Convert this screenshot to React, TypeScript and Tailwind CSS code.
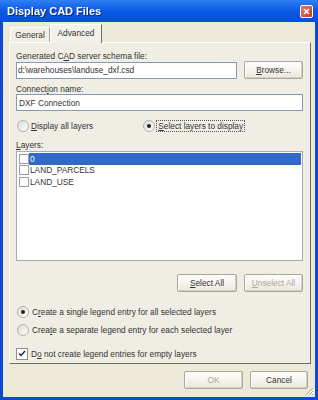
import React from 'react';

function U({ children }: { children: React.ReactNode }) {
  return <span className="underline underline-offset-[1px]">{children}</span>;
}

function Button({ children, w, disabled }: { children: React.ReactNode; w: string; disabled?: boolean }) {
  return (
    <div
      className={`${w} h-[18px] flex items-center justify-center rounded-[2px] border border-[#A9A797] bg-gradient-to-b from-[#FFFFFF] to-[#EAE8DC] shadow-[inset_-1px_-1px_0_#D6D2C2,inset_1px_1px_0_#FFFFFF] ${
        disabled ? 'text-[#ACA899]' : 'text-[#333]'
      }`}
    >
      {children}
    </div>
  );
}

function Radio({ checked }: { checked?: boolean }) {
  return (
    <div className="w-[12px] h-[12px] rounded-full border border-[#B0B0B0] bg-gradient-to-br from-[#DCDBD4] to-white flex items-center justify-center shrink-0">
      {checked && <div className="w-[4px] h-[4px] rounded-full bg-[#222]" />}
    </div>
  );
}

function Check({ checked }: { checked?: boolean }) {
  return (
    <div className="w-[12px] h-[12px] border border-[#8E8F8F] bg-white flex items-center justify-center shrink-0">
      {checked && (
        <svg width="8" height="7" viewBox="0 0 8 7">
          <path d="M1 3.5 L3 5.5 L7 1" stroke="#222" strokeWidth="1.3" fill="none" />
        </svg>
      )}
    </div>
  );
}

export default function App() {
  return (
    <div className="w-[318px] h-[400px] bg-[#0B4AD6] flex flex-col font-['Liberation_Sans',Arial,sans-serif] text-[8.3px] leading-[10px] text-[#333] select-none">
      {/* title bar */}
      <div className="h-[22px] shrink-0 flex items-center pl-[7px] pr-[4px] bg-gradient-to-b from-[#2F80F4] via-[#0A58E4] to-[#0550DA]">
        <span className="text-white font-bold text-[11px] drop-shadow-[1px_1px_0_#0A2A8A]">Display CAD Files</span>
        <div className="ml-auto mr-[1px] w-[13px] h-[13px] rounded-[2px] border border-white bg-gradient-to-br from-[#E87A5A] to-[#C23A1A] flex items-center justify-center">
          <svg width="7" height="7" viewBox="0 0 7 7">
            <path d="M1 1 L6 6 M6 1 L1 6" stroke="white" strokeWidth="1.6" />
          </svg>
        </div>
      </div>

      {/* body */}
      <div className="flex-1 mx-[3px] mb-[3px] bg-[#ECE9D8] flex flex-col relative">
        {/* tabs */}
        <div className="h-[19px] mt-[1px] pl-[7px] flex items-end relative z-10">
          <div className="w-[40px] h-[15px] border-t border-l border-white border-r border-r-[#ACA899] bg-[#F1EFE5] flex items-center justify-center">
            General
          </div>
          <div className="w-[52px] h-[19px] -mb-[1px] border-t border-l border-white border-r border-r-[#716F64] bg-[#F3F2EA] flex items-center justify-center pb-[2px]">
            Advanced
          </div>
        </div>

        {/* panel */}
        <div className="ml-[6px] w-[302px] h-[322px] border border-t-white border-l-white border-r-[#716F64] border-b-[#716F64] bg-[#F0EEE4] pl-[6px] pr-[7px] pt-[8px] flex flex-col">
          <div className="h-[10px]">
            Generated C<U>A</U>D server schema file:
          </div>
          <div className="flex items-center h-[18px]">
            <div className="w-[221px] h-[17px] border border-[#7F9DB9] bg-white pl-[1px] flex items-center">
              d:\warehouses\landuse_dxf.csd
            </div>
            <div className="ml-auto">
              <Button w="w-[59px]">
                <U>B</U>rowse...
              </Button>
            </div>
          </div>
          <div className="h-[10px] mt-[5px]">
            Connect<U>i</U>on name:
          </div>
          <div className="w-[287px] h-[17px] border border-[#7F9DB9] bg-white pl-[2px] flex items-center">
            DXF Connection
          </div>
          <div className="h-[12px] mt-[9px] flex items-center">
            <div className="ml-[1px]">
              <Radio />
            </div>
            <span className="ml-[2px]">
              <U>D</U>isplay all layers
            </span>
            <div className="ml-[50px]">
              <Radio checked />
            </div>
            <span className="ml-[2px] px-[1px] outline outline-1 outline-dotted outline-[#555]">
              <U>S</U>elect layers to display
            </span>
          </div>
          <div className="h-[10px] mt-[8px]">
            <U>L</U>ayers:
          </div>
          <div className="w-[287px] h-[110px] mt-[1px] border border-[#A5ACB5] bg-white pt-[1px] pl-[2px] pr-[1px] flex flex-col">
            {[
              { name: '0', sel: true },
              { name: 'LAND_PARCELS' },
              { name: 'LAND_USE' },
            ].map((r) => (
              <div key={r.name} className="flex items-center h-[11.5px]">
                <div className="w-[10px] h-[10px] border border-[#A0A0A0] bg-white shrink-0" />
                <div
                  className={`flex-1 h-[11.5px] flex items-center pl-[1px] ${
                    r.sel ? 'bg-[#316AC5] text-white' : ''
                  }`}
                >
                  {r.name}
                </div>
              </div>
            ))}
          </div>
          <div className="mt-[13px] flex justify-end gap-[7px]">
            <Button w="w-[60px]">
              <U>S</U>elect All
            </Button>
            <Button w="w-[59px]" disabled>
              <U>U</U>nselect All
            </Button>
          </div>
          <div className="h-[12px] mt-[14px] flex items-center">
            <div className="ml-[1px]">
              <Radio checked />
            </div>
            <span className="ml-[3px]">
              C<U>r</U>eate a single legend entry for all selected layers
            </span>
          </div>
          <div className="h-[12px] mt-[6px] flex items-center">
            <div className="ml-[1px]">
              <Radio />
            </div>
            <span className="ml-[3px]">
              Crea<U>t</U>e a separate legend entry for each selected layer
            </span>
          </div>
          <div className="h-[13px] mt-[11px] flex items-center">
            <Check checked />
            <span className="ml-[3px]">
              D<U>o</U> not create legend entries for empty layers
            </span>
          </div>
        </div>

        {/* footer buttons */}
        <div className="mt-[7px] pr-[7px] flex justify-end gap-[7px]">
          <Button w="w-[59px]" disabled>
            OK
          </Button>
          <Button w="w-[58px]">Cancel</Button>
        </div>

        <svg className="absolute right-[1px] bottom-[1px]" width="10" height="10" viewBox="0 0 10 10">
          <path d="M9 2 L2 9 M9 5 L5 9 M9 8 L8 9" stroke="#ACA899" strokeWidth="1" />
          <path d="M10 3 L3 10 M10 6 L6 10" stroke="#FFFFFF" strokeWidth="1" />
        </svg>
      </div>
    </div>
  );
}
